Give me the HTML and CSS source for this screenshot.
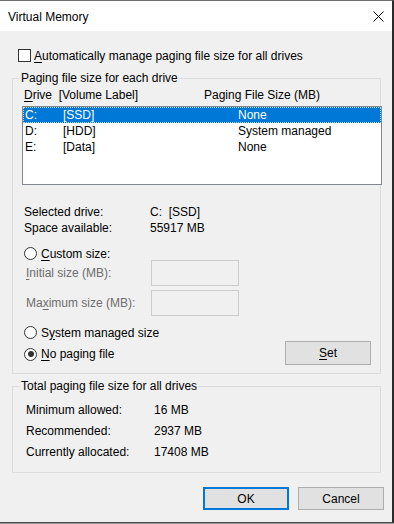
FILE: index.html
```html
<!DOCTYPE html>
<html>
<head>
<meta charset="utf-8">
<link rel="stylesheet" href="styles.css">
</head>
<body>
<div class="win">
  <div class="titlebar">
    <span class="title">Virtual Memory</span>
    <svg class="close" width="11" height="11" viewBox="0 0 11 11"><path d="M0.5 0.5 L10.5 10.5 M10.5 0.5 L0.5 10.5" stroke="#000" stroke-width="1" fill="none"/></svg>
  </div>
  <div class="client">
    <div class="auto-row">
      <span class="checkbox"></span>
      <span><u>A</u>utomatically manage paging file size for all drives</span>
    </div>

    <div class="group group1">
      <span class="legend">Paging file size for each drive</span>
      <div class="list-head">
        <span class="h-drive"><u>D</u>rive&nbsp; [Volume Label]</span>
        <span>Paging File Size (MB)</span>
      </div>
      <div class="listbox">
        <div class="lrow sel"><span class="c1">C:</span><span class="c2">[SSD]</span><span>None</span></div>
        <div class="lrow"><span class="c1">D:</span><span class="c2">[HDD]</span><span>System managed</span></div>
        <div class="lrow"><span class="c1">E:</span><span class="c2">[Data]</span><span>None</span></div>
      </div>
      <div class="info">
        <div class="irow"><span class="ilabel">Selected drive:</span><span>C:&nbsp; [SSD]</span></div>
        <div class="irow"><span class="ilabel">Space available:</span><span>55917 MB</span></div>
      </div>
      <div class="radio-row custom">
        <span class="radio"></span><span><u>C</u>ustom size:</span>
      </div>
      <div class="field-row first">
        <span class="flabel"><u>I</u>nitial size (MB):</span>
        <span class="tbox"></span>
      </div>
      <div class="field-row">
        <span class="flabel">Ma<u>x</u>imum size (MB):</span>
        <span class="tbox"></span>
      </div>
      <div class="radio-row system">
        <span class="radio"></span><span>S<u>y</u>stem managed size</span>
      </div>
      <div class="set-row">
        <div class="radio-row nopage">
          <span class="radio on"></span><span><u>N</u>o paging file</span>
        </div>
        <button class="btn set"><u>S</u>et</button>
      </div>
    </div>

    <div class="group group2">
      <span class="legend">Total paging file size for all drives</span>
      <div class="totals">
        <div class="trow"><span class="tlabel">Minimum allowed:</span><span>16 MB</span></div>
        <div class="trow"><span class="tlabel">Recommended:</span><span>2937 MB</span></div>
        <div class="trow"><span class="tlabel">Currently allocated:</span><span>17408 MB</span></div>
      </div>
    </div>

    <div class="buttons">
      <button class="btn ok">OK</button>
      <button class="btn">Cancel</button>
    </div>
  </div>
</div>
</body>
</html>
```
FILE: styles.css
```css
* { box-sizing: border-box; }
html, body { margin: 0; padding: 0; }
body {
  background: #9a9a9a;
  font-family: "Liberation Sans", Arial, sans-serif;
  font-size: 12px;
  color: #000;
  width: 394px;
  height: 524px;
  overflow: hidden;
}
u { text-decoration: underline; text-underline-offset: 2px; }
.win {
  width: 394px;
  height: 523px;
  border-top: 1px solid #6e6e6e;
  border-right: 2px solid #2b2b2b;
  border-bottom: 1px solid #4a4a4a;
  display: flex;
  flex-direction: column;
}
.titlebar {
  height: 30px;
  background: #fff;
  display: flex;
  align-items: center;
  justify-content: space-between;
  padding: 0 8px 0 8px;
  flex: none;
}
.title { padding-top: 1px; }
.close { margin-top: 0px; }
.client {
  flex: 1;
  background: #f0f0f0;
  display: flex;
  flex-direction: column;
}
.auto-row {
  margin: 18px 0 0 18px;
  height: 13px;
  display: flex;
  align-items: center;
  gap: 3px;
}
.checkbox {
  width: 13px; height: 13px;
  border: 1px solid #333;
  background: #fff;
  flex: none;
}
.group {
  position: relative;
  margin-left: 12px;
  width: 369px;
  border: 1px solid #dcdcdc;
  flex: none;
}
.legend {
  position: absolute;
  top: -8px;
  left: 7px;
  padding: 0 1px;
  background: #f0f0f0;
  line-height: 15px;
}
.group1 { margin-top: 16px; height: 296px; }
.list-head {
  margin-top: 9px;
  padding-left: 11px;
  display: flex;
  line-height: 15px;
}
.h-drive { width: 180px; }
.listbox {
  margin: 3px 0 0 9px;
  width: 360px;
  height: 79px;
  border: 1px solid #828790;
  background: #fff;
}
.lrow {
  height: 16px;
  line-height: 16px;
  display: flex;
  padding-left: 2px;
}
.lrow.sel {
  background: #0078d7;
  color: #fff;
  outline: 1px dotted #b8d6f2;
  outline-offset: -1px;
}
.c1 { width: 38px; }
.c2 { width: 175px; }
.info { margin-top: 19px; padding-left: 11px; }
.irow { display: flex; line-height: 16px; }
.ilabel { width: 126px; }
.radio-row {
  display: flex;
  align-items: center;
  gap: 4px;
  height: 13px;
  padding-left: 11px;
}
.radio {
  width: 13px; height: 13px;
  border: 1px solid #333;
  border-radius: 50%;
  background: #fff;
  flex: none;
  position: relative;
}
.radio.on::after {
  content: "";
  position: absolute;
  left: 2.5px; top: 2.5px;
  width: 6px; height: 6px;
  border-radius: 50%;
  background: #333;
}
.custom { margin-top: 11px; }
.field-row {
  display: flex;
  align-items: center;
  padding-left: 13px;
  margin-top: 4px;
  color: #6d6d6d;
}
.field-row.first { margin-top: 0; }
.flabel { width: 125px; }
.tbox {
  width: 88px; height: 26px;
  border: 1px solid #cccccc;
  background: #f0f0f0;
}
.system { margin-top: 10px; }
.set-row {
  margin-top: 2px;
  display: flex;
  align-items: center;
  justify-content: space-between;
  padding-right: 9px;
  height: 24px;
}
.nopage { margin-top: 2px; }
.btn {
  font-family: inherit;
  font-size: 12px;
  color: #000;
  background: #e1e1e1;
  border: 1px solid #adadad;
  width: 86px;
  height: 23px;
  padding: 0;
  border-radius: 0;
}
.set { height: 24px; }
.group2 { margin-top: 12px; height: 87px; }
.totals { margin-top: 13px; padding-left: 13px; }
.trow { display: flex; line-height: 21px; }
.tlabel { width: 128px; }
.buttons {
  margin-top: 14px;
  display: flex;
  justify-content: flex-end;
  gap: 9px;
  padding-right: 8px;
}
.btn.ok { border: 2px solid #0078d7; }
```
